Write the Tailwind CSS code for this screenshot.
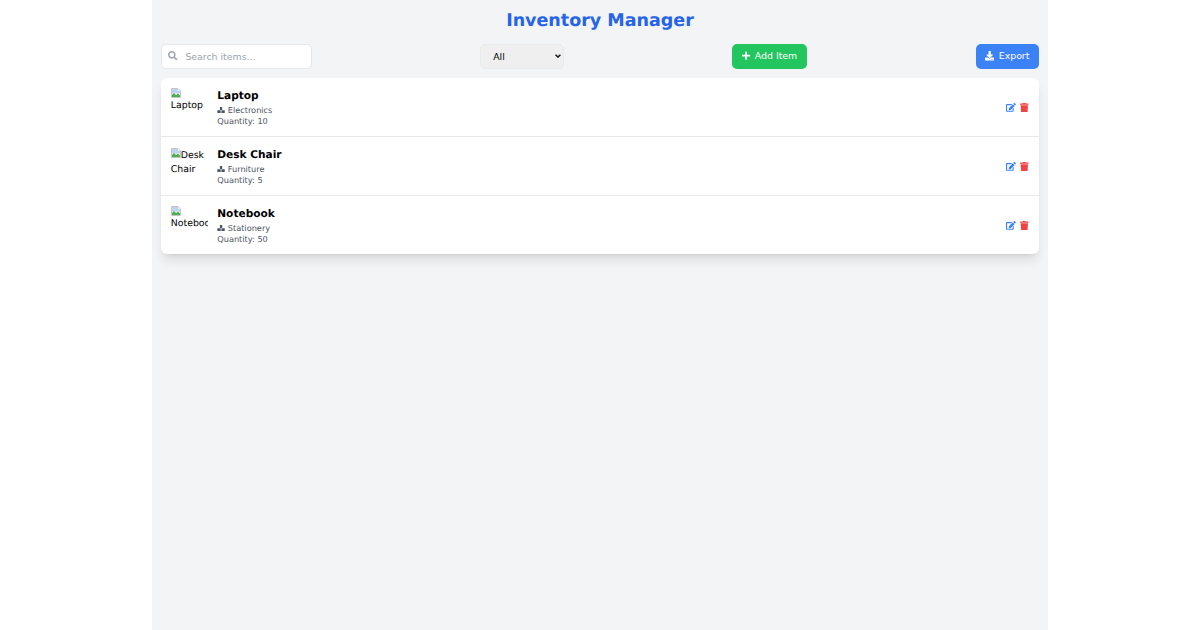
<!DOCTYPE html>
<html lang="en">
<head>
<meta charset="utf-8">
<title>Inventory Manager</title>
<script src="https://cdn.jsdelivr.net/npm/@tailwindcss/browser@4"></script>
</head>
<body class="bg-white font-['DejaVu_Sans',sans-serif] text-[12.5px] leading-[18.75px] text-black [text-rendering:geometricPrecision]">
<main class="mx-auto h-[630px] w-[896px] overflow-hidden bg-[#f3f4f6] px-[9.375px] pt-[9px]">
  <h1 class="mb-[9.5px] text-center text-[17.5px] leading-[25px] font-bold text-[#2563eb]">Inventory Manager</h1>
  <div class="mb-[9.375px] flex items-center justify-between">
    <div class="relative">
      <svg class="absolute top-[7.5px] left-[7px] h-[9.4px] w-[9.4px] fill-[#9ca3af]" viewBox="0 0 512 512"><path d="M505 442.7L405.3 343c-4.5-4.5-10.6-7-17-7H372c27.6-35.3 44-79.7 44-128C416 93.1 322.9 0 208 0S0 93.1 0 208s93.1 208 208 208c48.3 0 92.7-16.4 128-44v16.3c0 6.4 2.5 12.5 7 17l99.7 99.7c9.4 9.4 24.6 9.4 33.9 0l28.3-28.3c9.4-9.4 9.4-24.6.1-34zM208 336c-70.7 0-128-57.2-128-128 0-70.7 57.2-128 128-128 70.7 0 128 57.2 128 128 0 70.7-57.2 128-128 128z"/></svg>
      <input type="text" placeholder="Search items..." class="block h-[25px] w-[150.4px] rounded-[5px] border border-[#e5e7eb] bg-white pl-[23px] text-[9.375px] placeholder:text-[#9ca3af]">
    </div>
    <div class="relative">
      <select class="block h-[25px] w-[83.5px] appearance-none rounded-[5px] border border-[#e9eaec] bg-[#efefef] pt-[2px] pl-[12px] text-[9.375px] text-black">
        <option>All</option>
      </select>
      <svg class="absolute top-[10.5px] right-[3px] h-[4px] w-[6px]" viewBox="0 0 6 4" fill="none"><path d="M.6.7 3 3.1 5.4.7" stroke="#111" stroke-width="1.4"/></svg>
    </div>
    <button class="flex h-[25px] w-[75px] items-center justify-center gap-[4.5px] rounded-[5px] bg-[#22c55e] text-[9.375px] text-white">
      <svg class="h-[9.4px] w-[8.2px] fill-white" viewBox="0 0 448 512"><path d="M416 208H272V64c0-17.67-14.33-32-32-32h-32c-17.67 0-32 14.33-32 32v144H32c-17.67 0-32 14.33-32 32v32c0 17.67 14.33 32 32 32h144v144c0 17.67 14.33 32 32 32h32c17.67 0 32-14.33 32-32V304h144c17.67 0 32-14.33 32-32v-32c0-17.67-14.33-32-32-32z"/></svg>
      <span>Add Item</span>
    </button>
    <button class="flex h-[25px] w-[63px] items-center justify-center gap-[4.5px] rounded-[5px] bg-[#3b82f6] text-[9.375px] text-white">
      <svg class="h-[9.4px] w-[9.4px] fill-white" viewBox="0 0 512 512"><path d="M216 0h80c13.3 0 24 10.7 24 24v168h87.7c17.8 0 26.7 21.5 14.1 34.1L269.7 378.3c-7.5 7.5-19.8 7.5-27.3 0L90.1 226.1c-12.6-12.6-3.7-34.1 14.1-34.1H192V24c0-13.3 10.7-24 24-24zm296 376v112c0 13.3-10.7 24-24 24H24c-13.3 0-24-10.7-24-24V376c0-13.3 10.7-24 24-24h146.7l49 49c20.1 20.1 52.5 20.1 72.6 0l49-49H488c13.3 0 24 10.7 24 24zm-124 88c0-11-9-20-20-20s-20 9-20 20 9 20 20 20 20-9 20-20zm64 0c0-11-9-20-20-20s-20 9-20 20 9 20 20 20 20-9 20-20z"/></svg>
      <span>Export</span>
    </button>
  </div>
  <ul class="overflow-hidden rounded-[6px] bg-white shadow-[0_8px_12px_-2px_rgba(0,0,0,0.1),0_3px_5px_-3px_rgba(0,0,0,0.1)]">
    <li class="flex h-[59px] items-center justify-between border-b border-[#e5e7eb] px-[9.375px]">
      <div class="flex items-center">
        <div class="mr-[9px] h-[37.5px] w-[37.5px] overflow-hidden text-[9.375px] leading-[14px]">
          <svg class="mb-[1px] block h-[10px] w-[10px]" viewBox="0 0 10 10"><path d="M.5.5h6.500l2.500 2.500v6.500h-9z" fill="#fff" stroke="#c4c4c4"/><path d="M1 1h6v2h2v2.500H1z" fill="#bcd3f2"/><path d="M1 9V7l2-2 2 2 2-1.500L9 7.500V9z" fill="#4caf50"/></svg>
          <span class="block whitespace-nowrap">Laptop</span>
        </div>
        <div class="pt-[2.5px]">
          <h2 class="text-[10.6px] leading-[15px] font-bold">Laptop</h2>
          <p class="flex items-center text-[8.2px] leading-[12px] text-[#4b5563]"><svg class="mr-[2.4px] h-[6.5px] w-[8.1px] fill-[#4b5563]" viewBox="0 0 640 512"><path d="M230 0h180v230H230zM30 265h260v247H30zM350 265h260v247H350z"/></svg>Electronics</p>
          <p class="mt-[-0.5px] text-[8.2px] leading-[12px] text-[#4b5563]">Quantity: 10</p>
        </div>
      </div>
      <div class="flex items-center gap-[4px] pt-[1px] pr-[0.5px]">
        <svg class="h-[8.8px] w-[9.9px] fill-[#3b82f6]" viewBox="0 0 576 512"><path d="M402.6 83.2l90.2 90.2c3.8 3.8 3.8 10 0 13.8L274.4 405.6l-92.8 10.3c-12.4 1.4-22.9-9.1-21.5-21.5l10.3-92.8L388.8 83.2c3.8-3.8 10-3.8 13.8 0zm162-22.9l-48.8-48.8c-15.2-15.2-39.9-15.2-55.2 0l-35.4 35.4c-3.8 3.8-3.8 10 0 13.8l90.2 90.2c3.8 3.8 10 3.8 13.8 0l35.4-35.4c15.2-15.3 15.2-40 0-55.2zM384 346.2V448H64V128h229.8c3.2 0 6.2-1.3 8.5-3.5l40-40c7.6-7.6 2.2-20.5-8.5-20.5H48C21.500 64 0 85.500 0 112v352c0 26.500 21.500 48 48 48h352c26.500 0 48-21.500 48-48V306.200c0-10.700-12.900-16-20.500-8.500l-40 40c-2.200 2.300-3.500 5.300-3.500 8.500z"/></svg>
        <svg class="h-[9.4px] w-[8.6px] fill-[#ef4444]" preserveAspectRatio="none" viewBox="0 0 448 512"><path d="M432 32H312l-9.4-18.7A24 24 0 0 0 281.1 0H166.8a23.72 23.72 0 0 0-21.4 13.3L136 32H16A16 16 0 0 0 0 48v32a16 16 0 0 0 16 16h416a16 16 0 0 0 16-16V48a16 16 0 0 0-16-16zM53.2 467a48 48 0 0 0 47.9 45h245.8a48 48 0 0 0 47.9-45L416 128H32z"/></svg>
      </div>
    </li>
    <li class="flex h-[59px] items-center justify-between border-b border-[#e5e7eb] px-[9.375px]">
      <div class="flex items-center">
        <div class="mr-[9px] h-[37.5px] w-[37.5px] overflow-hidden pt-[1px] text-[9.375px] leading-[14px]">
          <svg class="inline-block h-[10px] w-[10px] align-[-0.5px]" viewBox="0 0 10 10"><path d="M.5.5h6.500l2.500 2.500v6.500h-9z" fill="#fff" stroke="#c4c4c4"/><path d="M1 1h6v2h2v2.500H1z" fill="#bcd3f2"/><path d="M1 9V7l2-2 2 2 2-1.500L9 7.500V9z" fill="#4caf50"/></svg><span>Desk Chair</span>
        </div>
        <div class="pt-[2.5px]">
          <h2 class="text-[10.6px] leading-[15px] font-bold">Desk Chair</h2>
          <p class="flex items-center text-[8.2px] leading-[12px] text-[#4b5563]"><svg class="mr-[2.4px] h-[6.5px] w-[8.1px] fill-[#4b5563]" viewBox="0 0 640 512"><path d="M230 0h180v230H230zM30 265h260v247H30zM350 265h260v247H350z"/></svg>Furniture</p>
          <p class="mt-[-0.5px] text-[8.2px] leading-[12px] text-[#4b5563]">Quantity: 5</p>
        </div>
      </div>
      <div class="flex items-center gap-[4px] pt-[1px] pr-[0.5px]">
        <svg class="h-[8.8px] w-[9.9px] fill-[#3b82f6]" viewBox="0 0 576 512"><path d="M402.6 83.2l90.2 90.2c3.8 3.8 3.8 10 0 13.8L274.4 405.6l-92.8 10.3c-12.4 1.4-22.9-9.1-21.5-21.5l10.3-92.8L388.8 83.2c3.8-3.8 10-3.8 13.8 0zm162-22.9l-48.8-48.8c-15.2-15.2-39.9-15.2-55.2 0l-35.4 35.4c-3.8 3.8-3.8 10 0 13.8l90.2 90.2c3.8 3.8 10 3.8 13.8 0l35.4-35.4c15.2-15.3 15.2-40 0-55.2zM384 346.2V448H64V128h229.8c3.2 0 6.2-1.3 8.5-3.5l40-40c7.6-7.6 2.2-20.5-8.5-20.5H48C21.500 64 0 85.500 0 112v352c0 26.500 21.500 48 48 48h352c26.500 0 48-21.500 48-48V306.200c0-10.700-12.900-16-20.500-8.500l-40 40c-2.200 2.300-3.500 5.300-3.500 8.500z"/></svg>
        <svg class="h-[9.4px] w-[8.6px] fill-[#ef4444]" preserveAspectRatio="none" viewBox="0 0 448 512"><path d="M432 32H312l-9.4-18.7A24 24 0 0 0 281.1 0H166.8a23.72 23.72 0 0 0-21.4 13.3L136 32H16A16 16 0 0 0 0 48v32a16 16 0 0 0 16 16h416a16 16 0 0 0 16-16V48a16 16 0 0 0-16-16zM53.2 467a48 48 0 0 0 47.9 45h245.8a48 48 0 0 0 47.9-45L416 128H32z"/></svg>
      </div>
    </li>
    <li class="flex h-[58px] items-center justify-between px-[9.375px]">
      <div class="flex items-center">
        <div class="mr-[9px] h-[37.5px] w-[37.5px] overflow-hidden text-[9.375px] leading-[14px]">
          <svg class="mb-[1px] block h-[10px] w-[10px]" viewBox="0 0 10 10"><path d="M.5.5h6.500l2.500 2.500v6.500h-9z" fill="#fff" stroke="#c4c4c4"/><path d="M1 1h6v2h2v2.500H1z" fill="#bcd3f2"/><path d="M1 9V7l2-2 2 2 2-1.500L9 7.500V9z" fill="#4caf50"/></svg>
          <span class="block whitespace-nowrap">Notebook</span>
        </div>
        <div class="pt-[2.5px]">
          <h2 class="text-[10.6px] leading-[15px] font-bold">Notebook</h2>
          <p class="flex items-center text-[8.2px] leading-[12px] text-[#4b5563]"><svg class="mr-[2.4px] h-[6.5px] w-[8.1px] fill-[#4b5563]" viewBox="0 0 640 512"><path d="M230 0h180v230H230zM30 265h260v247H30zM350 265h260v247H350z"/></svg>Stationery</p>
          <p class="mt-[-0.5px] text-[8.2px] leading-[12px] text-[#4b5563]">Quantity: 50</p>
        </div>
      </div>
      <div class="flex items-center gap-[4px] pt-[1px] pr-[0.5px]">
        <svg class="h-[8.8px] w-[9.9px] fill-[#3b82f6]" viewBox="0 0 576 512"><path d="M402.6 83.2l90.2 90.2c3.8 3.8 3.8 10 0 13.8L274.4 405.6l-92.8 10.3c-12.4 1.4-22.9-9.1-21.5-21.5l10.3-92.8L388.8 83.2c3.8-3.8 10-3.8 13.8 0zm162-22.9l-48.8-48.8c-15.2-15.2-39.9-15.2-55.2 0l-35.4 35.4c-3.8 3.8-3.8 10 0 13.8l90.2 90.2c3.8 3.8 10 3.8 13.8 0l35.4-35.4c15.2-15.3 15.2-40 0-55.2zM384 346.2V448H64V128h229.8c3.2 0 6.2-1.3 8.5-3.5l40-40c7.6-7.6 2.2-20.5-8.5-20.5H48C21.500 64 0 85.500 0 112v352c0 26.500 21.500 48 48 48h352c26.500 0 48-21.500 48-48V306.200c0-10.700-12.900-16-20.500-8.500l-40 40c-2.200 2.300-3.500 5.300-3.500 8.500z"/></svg>
        <svg class="h-[9.4px] w-[8.6px] fill-[#ef4444]" preserveAspectRatio="none" viewBox="0 0 448 512"><path d="M432 32H312l-9.4-18.7A24 24 0 0 0 281.1 0H166.8a23.72 23.72 0 0 0-21.4 13.3L136 32H16A16 16 0 0 0 0 48v32a16 16 0 0 0 16 16h416a16 16 0 0 0 16-16V48a16 16 0 0 0-16-16zM53.2 467a48 48 0 0 0 47.9 45h245.8a48 48 0 0 0 47.9-45L416 128H32z"/></svg>
      </div>
    </li>
  </ul>
</main>
</body>
</html>
